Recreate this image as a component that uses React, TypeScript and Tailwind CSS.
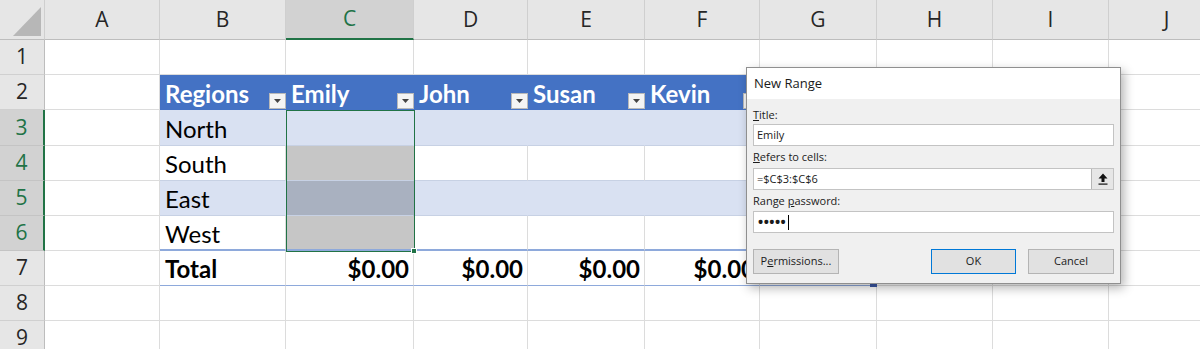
import React from 'react';

const COLS = ['A', 'B', 'C', 'D', 'E', 'F', 'G', 'H', 'I', 'J'];
const HEADERS = ['Regions', 'Emily', 'John', 'Susan', 'Kevin', ''];
const REGIONS = ['North', 'South', 'East', 'West'];
const ROWS = [1, 2, 3, 4, 5, 6, 7, 8, 9];

const DropButton: React.FC = () => (
  <div className="mb-[1px] flex h-[16px] w-[17px] shrink-0 items-center justify-center border border-[#b9b9b9] bg-[#f4f4f4]">
    <svg width="7" height="4" viewBox="0 0 7 4">
      <path d="M0 0 H7 L3.5 4 Z" fill="#444" />
    </svg>
  </div>
);

const Cell: React.FC<{ r: number; c: number }> = ({ r, c }) => {
  const inTable = c >= 1 && c <= 6 && r >= 2 && r <= 7;

  if (!inTable) {
    return <div className="border-r border-b border-[#dcdcdc] bg-white" />;
  }

  if (r === 2) {
    return (
      <div className="flex items-end justify-between bg-[#4472c4] pl-[5px]">
        <span className="self-center pt-[3px] text-[24px] font-bold leading-none text-white">
          {HEADERS[c - 1]}
        </span>
        {c <= 5 && <DropButton />}
      </div>
    );
  }

  if (r === 7) {
    return (
      <div
        className={`flex items-center border-r border-b border-r-[#dcdcdc] border-b-[#8ea9db] pt-[2px] text-[24px] font-bold leading-none text-black ${
          c === 1 ? 'pl-[5px]' : 'justify-end pr-[4px]'
        }`}
      >
        {c === 1 ? 'Total' : c <= 5 ? '$0.00' : ''}
      </div>
    );
  }

  const banded = r === 3 || r === 5;
  const bottom = r === 6 ? 'border-b-2 border-b-[#8ea9db]' : 'border-b border-b-[#c7d1e4]';
  let fill = banded ? 'bg-[#d9e1f2] border-r-[#d9e1f2]' : 'bg-white border-r-[#dcdcdc]';
  if (c === 2 && (r === 4 || r === 6)) fill = 'bg-[#c6c6c6] border-r-[#c6c6c6]';
  if (c === 2 && r === 5) fill = 'bg-[#a9b1c0] border-r-[#a9b1c0]';

  return (
    <div className={`flex items-center border-r pl-[5px] pt-[2px] text-[24px] leading-none text-black ${fill} ${bottom}`}>
      {c === 1 ? REGIONS[r - 3] : ''}
    </div>
  );
};

const Field: React.FC<{ children: React.ReactNode; className?: string }> = ({ children, className }) => (
  <div className={`flex h-[22px] items-center border border-[#c3c3c3] bg-white pl-[3px] ${className ?? ''}`}>
    {children}
  </div>
);

const NewRangeDialog: React.FC = () => (
  <div className="absolute left-[746px] top-[67px] z-20 flex h-[217px] w-[375px] flex-col border border-[#8f8f8f] bg-[#f0f0f0] font-['Open_Sans',sans-serif] text-[#1b1b1b] shadow-[3px_4px_10px_rgba(0,0,0,0.3)]">
    <div className="flex h-[31px] items-center bg-white pl-[7px] text-[13px]">New Range</div>
    <div className="flex flex-col px-[6px] pt-[8px] text-[11px]">
      <div className="h-[16px] leading-[16px]">
        <span className="underline">T</span>itle:
      </div>
      <Field className="mt-[1px]">Emily</Field>
      <div className="mt-[3px] h-[16px] leading-[16px]">
        <span className="underline">R</span>efers to cells:
      </div>
      <Field className="mt-[3px] pr-0">
        <span className="flex-1">=$C$3:$C$6</span>
        <div className="flex h-full w-[22px] items-center justify-center border-l border-[#b5b5b5] bg-[#e6e6e6]">
          <svg width="10" height="12" viewBox="0 0 10 12">
            <path d="M5 0.5 L9.5 5.5 H6.5 V9 H3.5 V5.5 H0.5 Z" fill="#111" />
            <rect x="0.5" y="10.5" width="9" height="1.2" fill="#111" />
          </svg>
        </div>
      </Field>
      <div className="mt-[3px] h-[16px] leading-[16px]">
        Range <span className="underline">p</span>assword:
      </div>
      <Field className="mt-[2px]">
        <span className="text-[19px] leading-none tracking-[-1.5px]">•••••</span>
        <span className="ml-[3px] h-[15px] w-[1px] bg-black" />
      </Field>
      <div className="mt-[16px] flex h-[25px] items-stretch">
        <button className="w-[86px] border border-[#b4b4b4] bg-[#e1e1e1] text-[11px]">
          P<span className="underline">e</span>rmissions...
        </button>
        <button className="ml-auto w-[85px] border border-[#0078d7] bg-[#e1e1e1] text-[11px]">OK</button>
        <button className="ml-[12px] w-[86px] border border-[#b4b4b4] bg-[#e1e1e1] text-[11px]">Cancel</button>
      </div>
    </div>
  </div>
);

const App: React.FC = () => {
  return (
    <div className="relative h-[349px] w-[1200px] overflow-hidden bg-white font-['Lato',sans-serif]">
      <div className="grid grid-cols-[45px_115px_126px_128px_114px_117px_115px_117px_116px_116px_116px] grid-rows-[40px_35px_35px_36px_35px_35px_35px_35px_35px_35px]">
        {/* column headers */}
        <div className="flex items-end justify-end border-r border-b border-r-[#cfcfcf] border-b-[#bdbdbd] bg-[#e6e6e6] pb-[3px] pr-[3px]">
          <svg width="28" height="29" viewBox="0 0 28 29">
            <path d="M28 0 V29 H0 Z" fill="#b7b7b7" />
          </svg>
        </div>
        {COLS.map((col) =>
          col === 'C' ? (
            <div
              key={col}
              className="flex items-center justify-center border-r border-b-2 border-r-[#cfcfcf] border-b-[#217346] bg-[#d2d2d2] font-['Open_Sans',sans-serif] text-[21px] text-[#217346]"
            >
              {col}
            </div>
          ) : (
            <div
              key={col}
              className="flex items-center justify-center border-r border-b border-r-[#cfcfcf] border-b-[#bdbdbd] bg-[#e6e6e6] font-['Open_Sans',sans-serif] text-[21px] text-[#262626]"
            >
              {col}
            </div>
          )
        )}

        {ROWS.map((r) => (
          <React.Fragment key={r}>
            {r >= 3 && r <= 6 ? (
              <div className="flex items-center justify-center border-r-2 border-b border-r-[#217346] border-b-[#c4c4c4] bg-[#d2d2d2] font-['Open_Sans',sans-serif] text-[21px] text-[#217346]">
                {r}
              </div>
            ) : (
              <div className="flex items-center justify-center border-r border-b border-r-[#bdbdbd] border-b-[#d0d0d0] bg-[#e6e6e6] font-['Open_Sans',sans-serif] text-[21px] text-[#262626]">
                {r}
              </div>
            )}
            {COLS.map((_, c) => (
              <Cell key={c} r={r} c={c} />
            ))}
          </React.Fragment>
        ))}
      </div>

      {/* selection outline C3:C6 and fill handle */}
      <div className="pointer-events-none absolute left-[286px] top-[110px] z-10 h-[142px] w-[129px] border border-[#217346]" />
      <div className="absolute left-[411px] top-[248px] z-10 h-[6px] w-[6px] border border-white bg-[#217346]" />
      {/* table resize handle */}
      <div className="absolute left-[870px] top-[281px] z-10 h-[6px] w-[7px] bg-[#3a57a6]" />

      <NewRangeDialog />
    </div>
  );
};

export default App;
